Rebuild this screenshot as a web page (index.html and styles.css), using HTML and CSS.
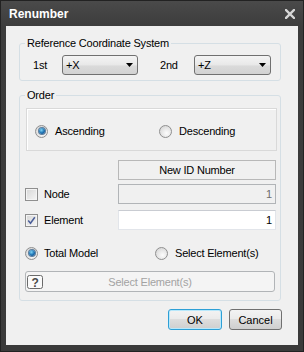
FILE: index.html
```html
<!DOCTYPE html>
<html lang="en">
<head>
    <meta charset="UTF-8">
    <title>Renumber</title>
    <link rel="stylesheet" href="styles.css">
</head>
<body>
    <div class="window">
        <div class="titlebar">
            <span class="title">Renumber</span>
            <svg class="close" width="10" height="10" viewBox="0 0 10 10">
                <path d="M1 1 L9 9 M9 1 L1 9" stroke="#d6d6d6" stroke-width="2.4" stroke-linecap="square"/>
            </svg>
        </div>
        <div class="client">
            <fieldset class="group coord">
                <legend>Reference Coordinate System</legend>
                <div class="coord-row">
                    <span class="axis-label first">1st</span>
                    <div class="combo first-combo">
                        <span>+X</span>
                        <svg width="7" height="4" viewBox="0 0 7 4"><polygon points="0,0 7,0 3.5,4" fill="#000"/></svg>
                    </div>
                    <span class="axis-label second">2nd</span>
                    <div class="combo second-combo">
                        <span>+Z</span>
                        <svg width="7" height="4" viewBox="0 0 7 4"><polygon points="0,0 7,0 3.5,4" fill="#000"/></svg>
                    </div>
                </div>
            </fieldset>

            <fieldset class="group order">
                <legend>Order</legend>
                <div class="order-box">
                    <label class="radio-item wide">
                        <span class="radio checked"><span class="dot"></span></span>
                        <span>Ascending</span>
                    </label>
                    <label class="radio-item">
                        <span class="radio"></span>
                        <span>Descending</span>
                    </label>
                </div>

                <div class="id-row header-row">
                    <div class="id-label"></div>
                    <div class="id-box header">New ID Number</div>
                </div>
                <div class="id-row node-row">
                    <label class="id-label">
                        <span class="check"></span>
                        <span>Node</span>
                    </label>
                    <div class="id-box disabled">1</div>
                </div>
                <div class="id-row element-row">
                    <label class="id-label">
                        <span class="check checked">
                            <svg width="9" height="9" viewBox="0 0 9 9"><path d="M1.2 4.6 L3.5 7.2 L7.8 1.2" fill="none" stroke="#4a5e99" stroke-width="1.5"/></svg>
                        </span>
                        <span>Element</span>
                    </label>
                    <div class="id-box input">1</div>
                </div>

                <div class="scope-row">
                    <label class="radio-item scope-first">
                        <span class="radio checked"><span class="dot"></span></span>
                        <span>Total Model</span>
                    </label>
                    <label class="radio-item">
                        <span class="radio"></span>
                        <span>Select Element(s)</span>
                    </label>
                </div>

                <div class="select-btn">
                    <svg class="help" width="16" height="14" viewBox="0 0 16 14">
                        <rect x="0.5" y="0.5" width="15" height="13" rx="2" fill="#fafafa" stroke="#6a6a6a"/>
                        <text x="8" y="11.5" text-anchor="middle" font-family="Liberation Sans, Arial, sans-serif" font-size="12" font-weight="bold" fill="#4a4a4a">?</text>
                    </svg>
                    <span class="select-text">Select Element(s)</span>
                </div>
            </fieldset>

            <div class="buttons">
                <button class="btn default">OK</button>
                <button class="btn">Cancel</button>
            </div>
        </div>
    </div>
</body>
</html>
```

FILE: styles.css
```css
body {
    margin: 0;
    font-family: "Liberation Sans", Arial, sans-serif;
    font-size: 11px;
    letter-spacing: -0.2px;
    color: #000;
}

.window {
    width: 304px;
    height: 352px;
    box-sizing: border-box;
    border: 1px solid #222;
    background: linear-gradient(#4a4a4a, #3c3c3c 26px, #3a3a3a);
    display: flex;
    flex-direction: column;
}

.titlebar {
    height: 25px;
    display: flex;
    align-items: center;
    justify-content: space-between;
    padding: 1px 8px 0 8px;
    box-sizing: border-box;
}

.title {
    color: #fff;
    font-weight: bold;
    font-size: 12px;
    letter-spacing: 0;
}

.client {
    flex: 1;
    margin: 0 5px 6px 5px;
    background: #f0f0f0;
    padding: 0 17px 0 13px;
}

.group {
    margin: 0;
    padding: 0;
    min-width: 0;
    border: 1px solid #d5dfe5;
    border-radius: 3px;
}

.group legend {
    margin-left: 5px;
    padding: 0 2px;
    line-height: 14px;
}

.coord {
    margin-top: 10px;
    padding-bottom: 5px;
}

.order {
    margin-top: 7px;
    padding-bottom: 8px;
}

.coord-row {
    display: flex;
    align-items: center;
    margin-top: 5px;
    padding-left: 13px;
}

.axis-label.first {
    width: 29px;
}

.axis-label.second {
    width: 34px;
    margin-left: 22px;
}

.combo {
    height: 20px;
    box-sizing: border-box;
    border: 1px solid #707070;
    border-radius: 3px;
    background: linear-gradient(#f4f4f4, #e8e8e8 50%, #dadada 55%, #d2d2d2);
    display: flex;
    align-items: center;
    justify-content: space-between;
    padding: 0 4px 0 3px;
}

.first-combo {
    width: 76px;
}

.second-combo {
    width: 77px;
}

.order-box {
    margin: 6px 3px 0 6px;
    border: 1px solid #d9d9d9;
    box-shadow: inset 1px 1px 0 #fff;
    padding: 15px 0 12px 8px;
    display: flex;
    line-height: 14px;
}

.radio-item {
    display: flex;
    align-items: center;
    line-height: 14px;
}

.radio-item.wide {
    width: 124px;
}

.radio {
    width: 13px;
    height: 13px;
    box-sizing: border-box;
    border-radius: 50%;
    border: 1px solid #8f8f8f;
    background: radial-gradient(circle at 60% 65%, #fdfdfd, #d8d8d8 80%);
    margin-right: 7px;
    display: flex;
    align-items: center;
    justify-content: center;
}

.radio .dot {
    width: 6px;
    height: 6px;
    border-radius: 50%;
    background: radial-gradient(circle at 40% 35%, #7fd4f5, #1a6fb0 55%, #0b3a70);
    box-shadow: 0 0 0 1px #5d7d9c;
}

.id-row {
    display: flex;
    align-items: center;
}

.header-row {
    margin-top: 9px;
}

.node-row {
    margin-top: 4px;
}

.element-row {
    margin-top: 6px;
}

.id-label {
    width: 98px;
    box-sizing: border-box;
    padding-left: 5px;
    display: flex;
    align-items: center;
}

.check {
    width: 13px;
    height: 13px;
    box-sizing: border-box;
    border: 1px solid #8f8f8f;
    background: linear-gradient(135deg, #d6d6d6, #f6f6f6);
    box-shadow: inset 0 0 0 1px #f4f4f4;
    margin-right: 6px;
    display: flex;
    align-items: center;
    justify-content: center;
}

.id-box {
    width: 158px;
    height: 20px;
    box-sizing: border-box;
    line-height: 18px;
}

.id-box.header {
    border: 1px solid #b8b8b8;
    background: #f0f0f0;
    text-align: center;
}

.id-box.disabled {
    border: 1px solid #b1b4b7;
    background: #f0f0f0;
    color: #6d6d6d;
    text-align: right;
    padding-right: 3px;
}

.id-box.input {
    border: 1px solid #e2e5ea;
    border-top-color: #c9ccd2;
    background: #fff;
    text-align: right;
    padding-right: 3px;
}

.scope-row {
    display: flex;
    margin-top: 16px;
    padding-left: 5px;
}

.scope-first {
    width: 130px;
}

.scope-first .radio {
    margin-right: 6px;
}

.select-btn {
    margin: 11px 0 0 5px;
    width: 250px;
    height: 21px;
    box-sizing: border-box;
    border: 1px solid #b1b4b7;
    border-radius: 3px;
    background: #f4f4f4;
    display: flex;
    align-items: center;
}

.help {
    margin-left: 1px;
}

.select-text {
    flex: 1;
    text-align: center;
    margin-right: 17px;
    color: #a3a3a3;
}

.buttons {
    display: flex;
    justify-content: flex-end;
    gap: 7px;
    margin-top: 8px;
    margin-right: -1px;
}

.btn {
    height: 21px;
    box-sizing: border-box;
    border: 1px solid #707070;
    border-radius: 3px;
    background: linear-gradient(#f3f3f3, #ebebeb 45%, #dddddd 50%, #cfcfcf);
    font-family: "Liberation Sans", Arial, sans-serif;
    font-size: 11px;
    color: #000;
    padding: 0;
    width: 53px;
}

.btn.default {
    width: 54px;
    border-color: #2d9fd6;
    box-shadow: inset 0 0 0 1px #b8e8fb;
}
```
